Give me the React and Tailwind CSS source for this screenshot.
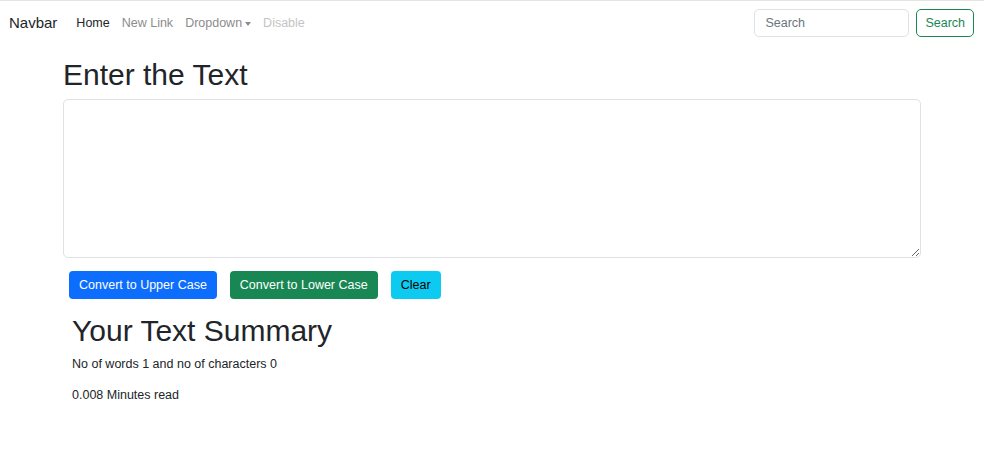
import { useState } from "react";

const Navbar = () => {
  return (
    <nav className="flex items-center justify-between border-t border-[#e5e5e5] bg-white pl-[9px] pr-[10px] h-[45px]">
      <div className="flex items-center">
        <a href="#" className="text-[15px] text-[#212529] mr-[13px] leading-[24px]">Navbar</a>
        <ul className="flex items-center text-[12.5px] leading-[20px]">
          <li><a href="#" className="block px-[6px] text-[#212529]">Home</a></li>
          <li><a href="#" className="block px-[6px] text-[#8c8c8c]">New Link</a></li>
          <li>
            <a href="#" className="flex items-center px-[6px] text-[#8c8c8c]">
              Dropdown
              <span className="ml-[3px] mt-[1px] border-t-[4px] border-x-[3.5px] border-x-transparent border-t-[#8c8c8c]" />
            </a>
          </li>
          <li><span className="block px-[6px] text-[#c4c4c4]">Disable</span></li>
        </ul>
      </div>
      <form className="flex items-center gap-[7px]" onSubmit={(e) => e.preventDefault()}>
        <input
          type="search"
          placeholder="Search"
          className="w-[155px] h-[28px] px-[10px] text-[12.5px] text-[#212529] placeholder:text-[#6c757d] border border-[#dee2e6] rounded-[5px] outline-none"
        />
        <button className="h-[28px] px-[8px] text-[12.5px] text-[#198754] border border-[#198754] rounded-[5px]">
          Search
        </button>
      </form>
    </nav>
  );
};

const TextForm = () => {
  const [text, setText] = useState("");

  const words = text.split(" ").length; // counts the empty string as one word too
  return (
    <div className="px-[63px]">
      <h1 className="text-[30px] leading-[36px] text-[#212529] mt-[12px] mb-[6px]">Enter the Text</h1>
      <textarea
        value={text}
        onChange={(e) => setText(e.target.value)}
        className="block w-full h-[159px] border border-[#dee2e6] rounded-[5px] px-[10px] py-[5px] text-[12.5px] outline-none"
      />
      <div className="flex gap-[13px] mt-[13px] ml-[6px]">
        <button
          onClick={() => setText(text.toUpperCase())}
          className="h-[28px] px-[10px] text-[12.5px] text-white bg-[#0d6efd] rounded-[4px]"
        >
          Convert to Upper Case
        </button>
        <button
          onClick={() => setText(text.toLowerCase())}
          className="h-[28px] px-[10px] text-[12.5px] text-white bg-[#198754] rounded-[4px]"
        >
          Convert to Lower Case
        </button>
        <button
          onClick={() => setText("")}
          className="h-[28px] px-[10px] text-[12.5px] text-black bg-[#0dcaf0] rounded-[4px]"
        >
          Clear
        </button>
      </div>
      <div className="px-[9px] mt-[14px] text-[#212529]">
        <h2 className="text-[30px] leading-[36px] mb-[6px]">Your Text Summary</h2>
        <p className="text-[12.5px] leading-[19px] mb-[12px]">
          No of words {words} and no of characters {text.length}
        </p>
        <p className="text-[12.5px] leading-[19px]">{0.008 * words} Minutes read</p>
      </div>
    </div>
  );
};

export default function App() {
  return (
    <div className="min-h-[450px] bg-white" style={{ fontFamily: '"Liberation Sans", Arial, sans-serif' }}>
      <Navbar />
      <TextForm />
    </div>
  );
}
